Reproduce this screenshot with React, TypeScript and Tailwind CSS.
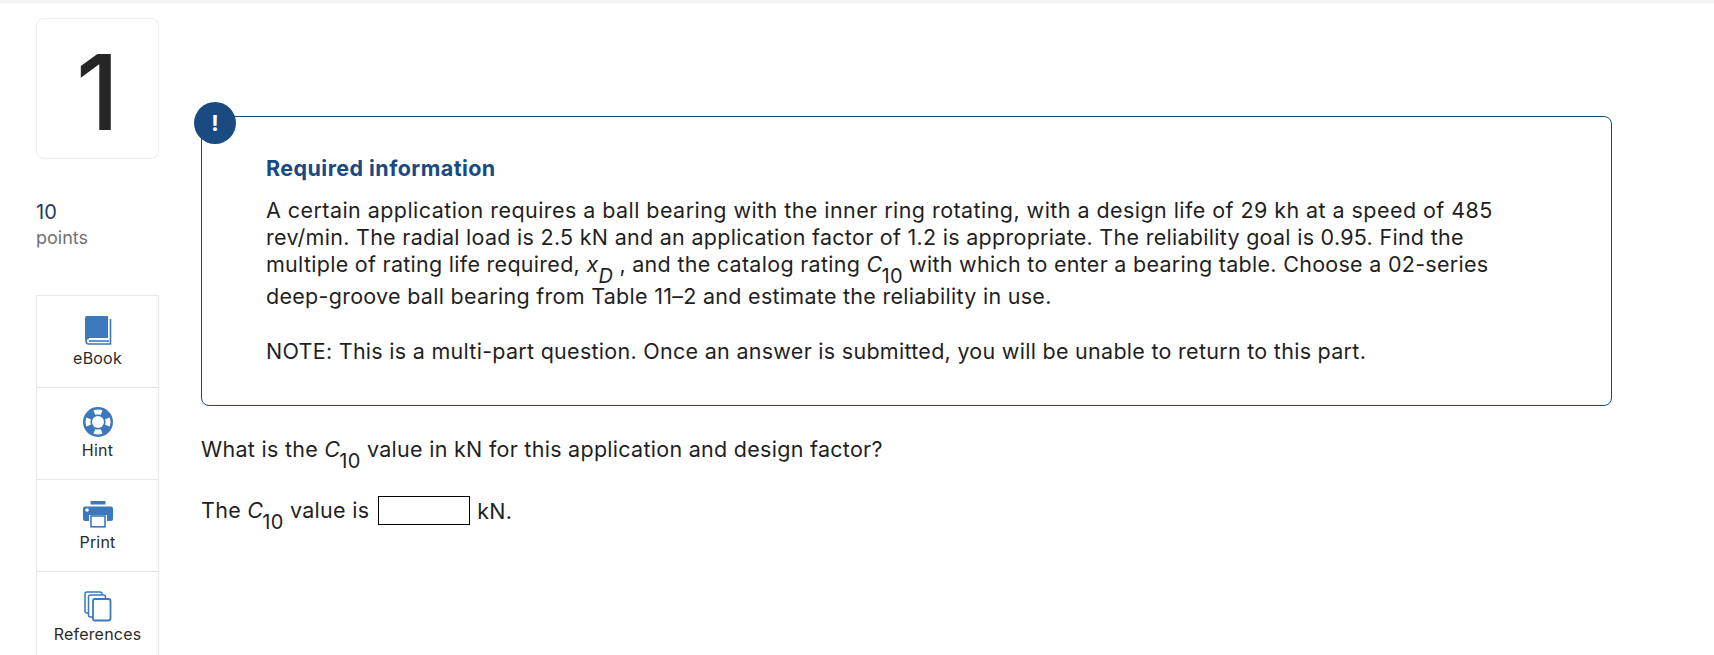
import React from "react";

const blue = "#3b78bc";

function BookIcon() {
  return (
    <svg width="30" height="30" viewBox="0 0 30 30">
      <path d="M2 3a2 2 0 0 1 2-2h21v22H6a4 4 0 0 0-4 3z" fill={blue} />
      <path d="M27.500 4v25H6a3 3 0 0 1-3-3 3 3 0 0 1 3-3" fill="none" stroke={blue} strokeWidth="1.600" />
      <path d="M6 26h20" stroke={blue} strokeWidth="1.600" />
    </svg>
  );
}

function HintIcon() {
  return (
    <svg width="30" height="30" viewBox="0 0 30 30">
      <circle cx="15" cy="15" r="15" fill={blue} />
      <circle cx="15" cy="15" r="6" fill="#fff" />
      <path d="M10.500 3.200q4.500-1.500 9 0l-1.700 4.600q-2.800-.8-5.600 0zM10.500 26.800q4.500 1.500 9 0l-1.700-4.600q-2.800.8-5.600 0zM3.200 10.500q-1.500 4.500 0 9l4.600-1.700q-.8-2.800 0-5.600zM26.800 10.500q1.500 4.500 0 9l-4.600-1.700q.8-2.800 0-5.600z" fill="#fff" />
    </svg>
  );
}

function PrintIcon() {
  return (
    <svg width="32" height="28" viewBox="0 0 32 28">
      <rect x="8.500" y="1" width="15" height="3.500" fill={blue} />
      <path d="M3 6.500h26a2 2 0 0 1 2 2V19a2 2 0 0 1-2 2h-4v-6H7v6H3a2 2 0 0 1-2-2V8.500a2 2 0 0 1 2-2z" fill={blue} />
      <circle cx="5" cy="10" r="1.800" fill="#fff" />
      <rect x="9" y="16" width="14" height="10.800" fill="#fff" stroke={blue} strokeWidth="1.600" />
    </svg>
  );
}

function RefsIcon() {
  return (
    <svg width="30" height="32" viewBox="0 0 30 32">
      <rect x="2" y="2" width="17" height="21" rx="2" fill="#fff" stroke={blue} strokeWidth="1.500" />
      <rect x="5.500" y="5" width="17" height="22" rx="2" fill="#fff" stroke={blue} strokeWidth="1.500" />
      <rect x="10" y="9" width="17.500" height="21.500" rx="2" fill="#fff" stroke={blue} strokeWidth="1.800" />
    </svg>
  );
}

const tools = [
  { label: "eBook", icon: <BookIcon /> },
  { label: "Hint", icon: <HintIcon /> },
  { label: "Print", icon: <PrintIcon /> },
  { label: "References", icon: <RefsIcon /> },
];

function C10() {
  return (
    <>
      <i>C</i>
      <sub className="text-[20px] align-[-6px] leading-[24px] ml-[-1px]">10</sub>
    </>
  );
}

export default function App() {
  return (
    <div className="w-[1714px] h-[655px] overflow-hidden bg-white text-[#1f1f1f] font-['Inter','Liberation_Sans',sans-serif]">
      <div className="h-[3px] bg-[#f2f2f2]" />
      <div className="flex pl-[36px] pt-[15px]">
        {/* Left rail */}
        <div className="w-[123px] shrink-0">
          <div className="h-[141px] rounded-[8px] border border-[#efefef] bg-white flex items-center justify-center pt-[6px] text-[104px] font-medium leading-none text-[#262626]">
            1
          </div>
          <div className="mt-[40px] text-[20px] leading-[26px] text-[#1f3a5f]">10</div>
          <div className="text-[18px] leading-[26px] text-[#707070]">points</div>
          <div className="mt-[44px] border border-[#e8e8e8] border-b-0">
            {tools.map((t) => (
              <div key={t.label} className="h-[92px] flex flex-col items-center pt-[18px] border-b border-[#e8e8e8] last:border-b-0">
                <div className="h-[32px] flex items-center justify-center">{t.icon}</div>
                <div className="mt-[2px] text-[16px] tracking-[0.2px] leading-[20px] text-[#2b2b2b]">{t.label}</div>
              </div>
            ))}
          </div>
        </div>

        {/* Question */}
        <div className="ml-[42px] w-[1411px] pt-[98px] text-[21.5px] tracking-[0.28px]">
          <div className="relative h-[290px] rounded-[8px] border border-[#1a4a82] pl-[64px] pt-[37px] whitespace-nowrap">
            <div className="absolute left-[-8px] top-[-15px] w-[42px] h-[42px] rounded-full bg-[#1a4a82] flex items-center justify-center text-white text-[22px] font-bold">
              !
            </div>
            <div className="leading-[28px] font-bold tracking-[0.44px] text-[#1a4a82]">Required information</div>
            <p className="mt-[15px] leading-[27px]">
              <span className="tracking-[0.44px]">A certain application requires a ball bearing with the inner ring rotating, with a design life of 29 kh at a speed of 485</span>
              <br />
              rev/min. The radial load is 2.5 kN and an application factor of 1.2 is appropriate. The reliability goal is 0.95. Find the
              <br />
              multiple of rating life required, <i>x</i>
              <sub className="text-[20px] italic align-[-6px] leading-[24px]">D</sub> , and the catalog rating <C10 /> with which to enter a bearing table. Choose a 02-series
              <br />
              deep-groove ball bearing from Table 11–2 and estimate the reliability in use.
            </p>
            <p className="mt-[28px] leading-[27px]">
              NOTE: This is a multi-part question. Once an answer is submitted, you will be unable to return to this part.
            </p>
          </div>
          <p className="mt-[30px] leading-[27px]">
            What is the <C10 /> value in kN for this application and design factor?
          </p>
          <div className="mt-[23px] flex items-center leading-[27px]">
            <span className="pt-[6px]">The <C10 /> value is</span>
            <input className="ml-[9px] mr-[7px] w-[92px] h-[29px] border border-black bg-white" />
            <span className="pt-[2px]">kN.</span>
          </div>
        </div>
      </div>
    </div>
  );
}
